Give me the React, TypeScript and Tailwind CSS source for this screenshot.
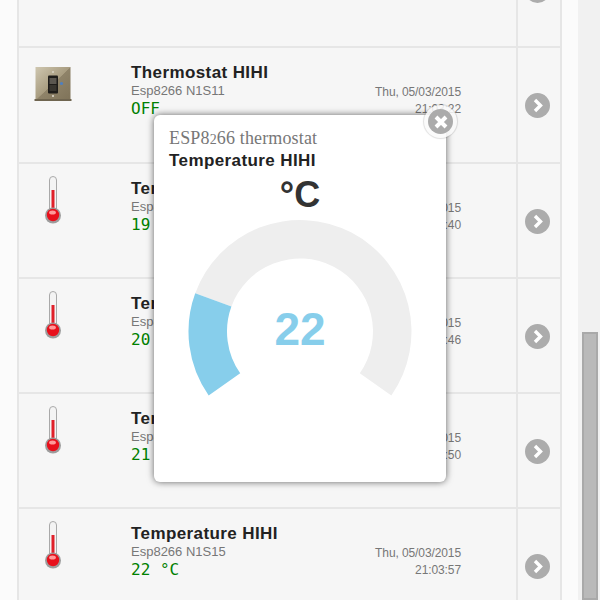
const rows = [
  { icon: "switch", title: "Thermostat HIHI", sub: "Esp8266 N1S10", val: "OFF", time: "21:03:10" },
  { icon: "switch", title: "Thermostat HIHI", sub: "Esp8266 N1S11", val: "OFF", time: "21:03:22" },
  { icon: "temp", title: "Temperature HIHI", sub: "Esp8266 N1S12", val: "19 °C", time: "21:03:40" },
  { icon: "temp", title: "Temperature HIHI", sub: "Esp8266 N1S13", val: "20 °C", time: "21:03:46" },
  { icon: "temp", title: "Temperature HIHI", sub: "Esp8266 N1S14", val: "21 °C", time: "21:03:50" },
  { icon: "temp", title: "Temperature HIHI", sub: "Esp8266 N1S15", val: "22 °C", time: "21:03:57" },
];

function SwitchIcon() {
  return (
    <svg width="38" height="36" viewBox="0 0 38 36" className="block">
      <defs>
        <linearGradient id="sw" x1="0" y1="0" x2="1" y2="1">
          <stop offset="0" stopColor="#cfc7b0" />
          <stop offset="0.5" stopColor="#a89c80" />
          <stop offset="0.51" stopColor="#8f8369" />
          <stop offset="1" stopColor="#7f7359" />
        </linearGradient>
      </defs>
      <rect x="1.5" y="1" width="35" height="33" fill="url(#sw)" />
      <rect x="0.5" y="33" width="37" height="2" fill="#6f6550" />
      <rect x="14" y="9.5" width="10" height="18" rx="1" fill="#1f1d1a" />
      <rect x="15.5" y="12" width="7" height="6" fill="#5b5750" />
      <rect x="15.5" y="19" width="7" height="6" fill="#38352f" />
      <circle cx="19" cy="6" r="1" fill="#d8d3c4" />
      <circle cx="19" cy="30" r="1" fill="#e2ddd0" />
      <circle cx="27.5" cy="17.5" r="1.6" fill="#4d7fc0" />
    </svg>
  );
}

function ThermoIcon() {
  return (
    <svg width="18" height="48" viewBox="0 0 18 48" className="block">
      <rect x="5.5" y="0.5" width="7" height="36" rx="3.5" fill="#f4f4f4" stroke="#a9a9a9" />
      <rect x="7.5" y="14" width="3" height="24" fill="#e0202a" />
      <circle cx="9" cy="39.5" r="8" fill="#9d9d9d" />
      <circle cx="9" cy="39" r="6.2" fill="#e8101c" />
      <ellipse cx="8.5" cy="36.5" rx="3.4" ry="2" fill="#ff9a9a" />
    </svg>
  );
}

function Arrow() {
  return (
    <svg width="25" height="25" viewBox="0 0 25 25" className="block">
      <circle cx="12.5" cy="12.5" r="12.5" fill="#acacac" />
      <path d="M10 7l5.5 5.5L10 18" fill="none" stroke="#fff" strokeWidth="3.4" />
    </svg>
  );
}

function pt(r: number, deg: number) {
  const a = (deg * Math.PI) / 180;
  return `${(112 - r * Math.cos(a)).toFixed(2)} ${(111.5 - r * Math.sin(a)).toFixed(2)}`;
}

function sector(from: number, to: number) {
  const R = 111.5;
  const r = 73;
  const large = to - from > 180 ? 1 : 0;
  return `M${pt(R, from)}A${R} ${R} 0 ${large} 1 ${pt(R, to)}L${pt(r, to)}A${r} ${r} 0 ${large} 0 ${pt(r, from)}Z`;
}

function Gauge() {
  return (
    <svg width="224" height="180" viewBox="0 0 224 180" className="block">
      <path d={sector(20, 215)} fill="#eeeeee" />
      <path d={sector(-35, 20)} fill="#87ceeb" />
      <text
        x="112"
        y="125"
        textAnchor="middle"
        fontFamily="'Liberation Sans', sans-serif"
        fontWeight="700"
        fontSize="46"
        fill="#87ceeb"
      >
        22
      </text>
    </svg>
  );
}

export default function App() {
  return (
    <div className="relative flex h-[600px] w-[600px] overflow-hidden bg-[#fbfbfb] font-['Liberation_Sans',sans-serif]">
      <div className="w-[17px] shrink-0" />
      <div className="w-[545px] shrink-0 border-x-2 border-[#e6e6e6] bg-[#f6f6f6]">
        <div className="mt-[-67px]">
          {rows.map((r, i) => (
            <div key={i} className="flex h-[115.25px] border-b-2 border-[#e6e6e6]">
              <div className="flex min-w-0 flex-1">
                <div className="w-[112px] shrink-0">
                  {r.icon === "temp" ? (
                    <div className="pl-[25px] pt-[12px]">
                      <ThermoIcon />
                    </div>
                  ) : (
                    <div className="pl-[15px] pt-[18px]">
                      <SwitchIcon />
                    </div>
                  )}
                </div>
                <div className="min-w-0 flex-1 pt-[15px]">
                  <div className="text-[17px] leading-[19px] font-bold tracking-[0.4px] text-[#222]">{r.title}</div>
                  <div className="mt-[1px] text-[13px] leading-[16px] text-[#777]">{r.sub}</div>
                  <div className="whitespace-pre font-['DejaVu_Sans_Mono',monospace] text-[16px] leading-[20px] text-[#008000]">
                    {r.val}
                  </div>
                </div>
                <div className="pr-[55px] pt-[36px] text-right text-[12px] leading-[17px] tracking-[-0.1px] text-[#777]">
                  <div>Thu, 05/03/2015</div>
                  <div>{r.time}</div>
                </div>
              </div>
              <div className="flex w-[44px] shrink-0 items-center justify-center border-l-2 border-[#e6e6e6] pt-[2px] pr-[3px]">
                <Arrow />
              </div>
            </div>
          ))}
        </div>
      </div>
      <div className="w-[16px] shrink-0" />
      <div className="flex w-[22px] shrink-0 flex-col justify-end bg-[#f1f1f1]">
        <div className="ml-[4px] h-[268px] w-[16px] border-2 border-[#a9a9a9] bg-[#b9b9b9]" />
      </div>

      <div className="absolute left-[154px] top-[115px] h-[367px] w-[292px] rounded-[6px] bg-white pl-[15px] pt-[13px] shadow-[0_0_7px_rgba(0,0,0,0.6)]">
        <div className="font-['Liberation_Serif',serif] text-[18px] leading-[20px] tracking-[0.15px] text-[#777]">
          ESP8<span className="text-[14px]">2</span>66 thermostat
        </div>
        <div className="mt-[1px] text-[17px] leading-[20px] font-bold tracking-[0.4px] text-[#222]">Temperature HIHI</div>
        <div className="mr-[15px] mt-[4px] text-center text-[36px] leading-[40px] font-bold text-[#333]">°C</div>
        <div className="mt-[5px] ml-[19px]">
          <Gauge />
        </div>
        <div className="absolute right-[-7px] top-[-6px] flex h-[25px] w-[25px] items-center justify-center rounded-full bg-[#ababab] shadow-[0_0_0_4px_rgba(255,255,255,0.85),0_0_1px_5px_rgba(0,0,0,0.12)]">
          <svg width="16" height="16" viewBox="0 0 16 16">
            <path d="M3 3l10 10M13 3L3 13" stroke="#fff" strokeWidth="4" />
          </svg>
        </div>
      </div>
    </div>
  );
}
